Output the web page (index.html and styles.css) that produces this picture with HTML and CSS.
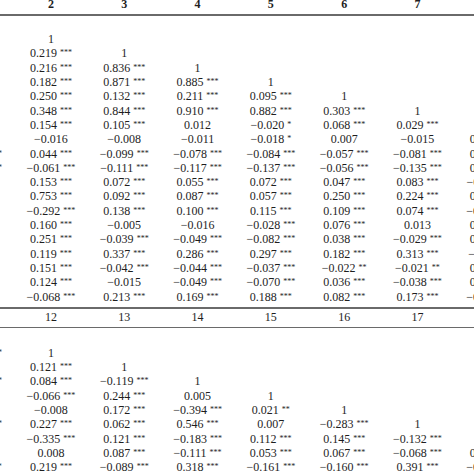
FILE: index.html
```html
<!DOCTYPE html>
<html lang="en">
<head>
<meta charset="utf-8">
<title>Correlation matrix</title>
<link rel="stylesheet" href="styles.css">
</head>
<body>
<div class="sheet">
  <table class="matrix top">
    <thead>
      <tr><th>1</th><th>2</th><th>3</th><th>4</th><th>5</th><th>6</th><th>7</th><th>8</th></tr>
    </thead>
    <tbody>
      <tr class="first"><td>1</td><td></td><td></td><td></td><td></td><td></td><td></td><td></td></tr>
      <tr><td>0.114 <span class="s">***</span></td><td>1</td><td></td><td></td><td></td><td></td><td></td><td></td></tr>
      <tr><td>0.035 <span class="s">***</span></td><td>0.219 <span class="s">***</span></td><td>1</td><td></td><td></td><td></td><td></td><td></td></tr>
      <tr><td>0.026 <span class="s">**</span></td><td>0.216 <span class="s">***</span></td><td>0.836 <span class="s">***</span></td><td>1</td><td></td><td></td><td></td><td></td></tr>
      <tr><td>0.041 <span class="s">***</span></td><td>0.182 <span class="s">***</span></td><td>0.871 <span class="s">***</span></td><td>0.885 <span class="s">***</span></td><td>1</td><td></td><td></td><td></td></tr>
      <tr><td>0.102 <span class="s">***</span></td><td>0.250 <span class="s">***</span></td><td>0.132 <span class="s">***</span></td><td>0.211 <span class="s">***</span></td><td>0.095 <span class="s">***</span></td><td>1</td><td></td><td></td></tr>
      <tr><td>0.063 <span class="s">***</span></td><td>0.348 <span class="s">***</span></td><td>0.844 <span class="s">***</span></td><td>0.910 <span class="s">***</span></td><td>0.882 <span class="s">***</span></td><td>0.303 <span class="s">***</span></td><td>1</td><td></td></tr>
      <tr><td>0.017 <span class="s">*</span></td><td>0.154 <span class="s">***</span></td><td>0.105 <span class="s">***</span></td><td>0.012</td><td>−0.020 <span class="s">*</span></td><td>0.068 <span class="s">***</span></td><td>0.029 <span class="s">***</span></td><td>1</td></tr>
      <tr><td>0.009</td><td>−0.016</td><td>−0.008</td><td>−0.011</td><td>−0.018 <span class="s">*</span></td><td>0.007</td><td>−0.015</td><td>0.035 <span class="s">***</span></td></tr>
      <tr><td>−0.052 <span class="s">***</span></td><td>0.044 <span class="s">***</span></td><td>−0.099 <span class="s">***</span></td><td>−0.078 <span class="s">***</span></td><td>−0.084 <span class="s">***</span></td><td>−0.057 <span class="s">***</span></td><td>−0.081 <span class="s">***</span></td><td>0.041 <span class="s">***</span></td></tr>
      <tr><td>−0.047 <span class="s">***</span></td><td>−0.061 <span class="s">***</span></td><td>−0.111 <span class="s">***</span></td><td>−0.117 <span class="s">***</span></td><td>−0.137 <span class="s">***</span></td><td>−0.056 <span class="s">***</span></td><td>−0.135 <span class="s">***</span></td><td>0.028 <span class="s">***</span></td></tr>
      <tr><td>0.091 <span class="s">***</span></td><td>0.153 <span class="s">***</span></td><td>0.072 <span class="s">***</span></td><td>0.055 <span class="s">***</span></td><td>0.072 <span class="s">***</span></td><td>0.047 <span class="s">***</span></td><td>0.083 <span class="s">***</span></td><td>−0.112 <span class="s">***</span></td></tr>
      <tr><td>0.128 <span class="s">***</span></td><td>0.753 <span class="s">***</span></td><td>0.092 <span class="s">***</span></td><td>0.087 <span class="s">***</span></td><td>0.057 <span class="s">***</span></td><td>0.250 <span class="s">***</span></td><td>0.224 <span class="s">***</span></td><td>0.164 <span class="s">***</span></td></tr>
      <tr><td>0.033 <span class="s">***</span></td><td>−0.292 <span class="s">***</span></td><td>0.138 <span class="s">***</span></td><td>0.100 <span class="s">***</span></td><td>0.115 <span class="s">***</span></td><td>0.109 <span class="s">***</span></td><td>0.074 <span class="s">***</span></td><td>−0.045 <span class="s">***</span></td></tr>
      <tr><td>0.021 <span class="s">**</span></td><td>0.160 <span class="s">***</span></td><td>−0.005</td><td>−0.016</td><td>−0.028 <span class="s">***</span></td><td>0.076 <span class="s">***</span></td><td>0.013</td><td>0.067 <span class="s">***</span></td></tr>
      <tr><td>0.074 <span class="s">***</span></td><td>0.251 <span class="s">***</span></td><td>−0.039 <span class="s">***</span></td><td>−0.049 <span class="s">***</span></td><td>−0.082 <span class="s">***</span></td><td>0.038 <span class="s">***</span></td><td>−0.029 <span class="s">***</span></td><td>0.093 <span class="s">***</span></td></tr>
      <tr><td>0.015 <span class="s">*</span></td><td>0.119 <span class="s">***</span></td><td>0.337 <span class="s">***</span></td><td>0.286 <span class="s">***</span></td><td>0.297 <span class="s">***</span></td><td>0.182 <span class="s">***</span></td><td>0.313 <span class="s">***</span></td><td>−0.019 <span class="s">**</span></td></tr>
      <tr><td>0.062 <span class="s">***</span></td><td>0.151 <span class="s">***</span></td><td>−0.042 <span class="s">***</span></td><td>−0.044 <span class="s">***</span></td><td>−0.037 <span class="s">***</span></td><td>−0.022 <span class="s">**</span></td><td>−0.021 <span class="s">**</span></td><td>0.052 <span class="s">***</span></td></tr>
      <tr><td>0.044 <span class="s">***</span></td><td>0.124 <span class="s">***</span></td><td>−0.015</td><td>−0.049 <span class="s">***</span></td><td>−0.070 <span class="s">***</span></td><td>0.036 <span class="s">***</span></td><td>−0.038 <span class="s">***</span></td><td>0.031 <span class="s">***</span></td></tr>
      <tr><td>0.012</td><td>−0.068 <span class="s">***</span></td><td>0.213 <span class="s">***</span></td><td>0.169 <span class="s">***</span></td><td>0.188 <span class="s">***</span></td><td>0.082 <span class="s">***</span></td><td>0.173 <span class="s">***</span></td><td>−0.076 <span class="s">***</span></td></tr>
    </tbody>
  </table>

  <table class="matrix bottom">
    <thead>
      <tr><th>11</th><th>12</th><th>13</th><th>14</th><th>15</th><th>16</th><th>17</th><th>18</th></tr>
    </thead>
    <tbody>
      <tr class="first"><td>1</td><td></td><td></td><td></td><td></td><td></td><td></td><td></td></tr>
      <tr><td>−0.071 <span class="s">***</span></td><td>1</td><td></td><td></td><td></td><td></td><td></td><td></td></tr>
      <tr><td>0.135 <span class="s">***</span></td><td>0.121 <span class="s">***</span></td><td>1</td><td></td><td></td><td></td><td></td><td></td></tr>
      <tr><td>−0.058 <span class="s">***</span></td><td>0.084 <span class="s">***</span></td><td>−0.119 <span class="s">***</span></td><td>1</td><td></td><td></td><td></td><td></td></tr>
      <tr><td>0.046 <span class="s">***</span></td><td>−0.066 <span class="s">***</span></td><td>0.244 <span class="s">***</span></td><td>0.005</td><td>1</td><td></td><td></td><td></td></tr>
      <tr><td>0.010</td><td>−0.008</td><td>0.172 <span class="s">***</span></td><td>−0.394 <span class="s">***</span></td><td>0.021 <span class="s">**</span></td><td>1</td><td></td><td></td></tr>
      <tr><td>−0.092 <span class="s">***</span></td><td>0.227 <span class="s">***</span></td><td>0.062 <span class="s">***</span></td><td>0.546 <span class="s">***</span></td><td>0.007</td><td>−0.283 <span class="s">***</span></td><td>1</td><td></td></tr>
      <tr><td>0.083 <span class="s">***</span></td><td>−0.335 <span class="s">***</span></td><td>0.121 <span class="s">***</span></td><td>−0.183 <span class="s">***</span></td><td>0.112 <span class="s">***</span></td><td>0.145 <span class="s">***</span></td><td>−0.132 <span class="s">***</span></td><td>1</td></tr>
      <tr><td>0.024 <span class="s">**</span></td><td>0.008</td><td>0.087 <span class="s">***</span></td><td>−0.111 <span class="s">***</span></td><td>0.053 <span class="s">***</span></td><td>0.067 <span class="s">***</span></td><td>−0.068 <span class="s">***</span></td><td>0.054 <span class="s">***</span></td></tr>
      <tr><td>−0.117 <span class="s">***</span></td><td>0.219 <span class="s">***</span></td><td>−0.089 <span class="s">***</span></td><td>0.318 <span class="s">***</span></td><td>−0.161 <span class="s">***</span></td><td>−0.160 <span class="s">***</span></td><td>0.391 <span class="s">***</span></td><td>−0.236 <span class="s">***</span></td></tr>
    </tbody>
  </table>
</div>
</body>
</html>
```

FILE: styles.css
```css
html, body {
  margin: 0;
  padding: 0;
  width: 474px;
  height: 474px;
  overflow: hidden;
  background: #ffffff;
}

body {
  font-family: "Liberation Serif", "DejaVu Serif", serif;
  font-size: 12px;
  color: #1e1e1e;
}

.sheet {
  width: 474px;
  overflow: hidden;
}

.matrix {
  border-collapse: separate;
  border-spacing: 0;
  table-layout: fixed;
  width: 586.4px;
  margin-left: -59px;
}

.matrix th,
.matrix td {
  width: 73.3px;
  padding: 0;
  text-align: center;
  line-height: 14.3px;
  white-space: nowrap;
}

.matrix td {
  height: 14.3px;
}

.matrix th {
  font-weight: normal;
}

.top {
  margin-top: -3.2px;
}

.top th {
  font-weight: bold;
  padding-bottom: 3px;
  border-bottom: 2px solid #6a6a6a;
}

.top .first td {
  padding-top: 1.75px;
}

.bottom {
  margin-top: 3.15px;
}

.bottom th {
  padding-top: 1px;
  padding-bottom: 2.7px;
  border-top: 2px solid #6a6a6a;
  border-bottom: 1px solid #6a6a6a;
}

.bottom .first td {
  padding-top: 3.5px;
}

.s {
  font-size: 8px;
  line-height: 0;
  vertical-align: 2.5px;
}
```
